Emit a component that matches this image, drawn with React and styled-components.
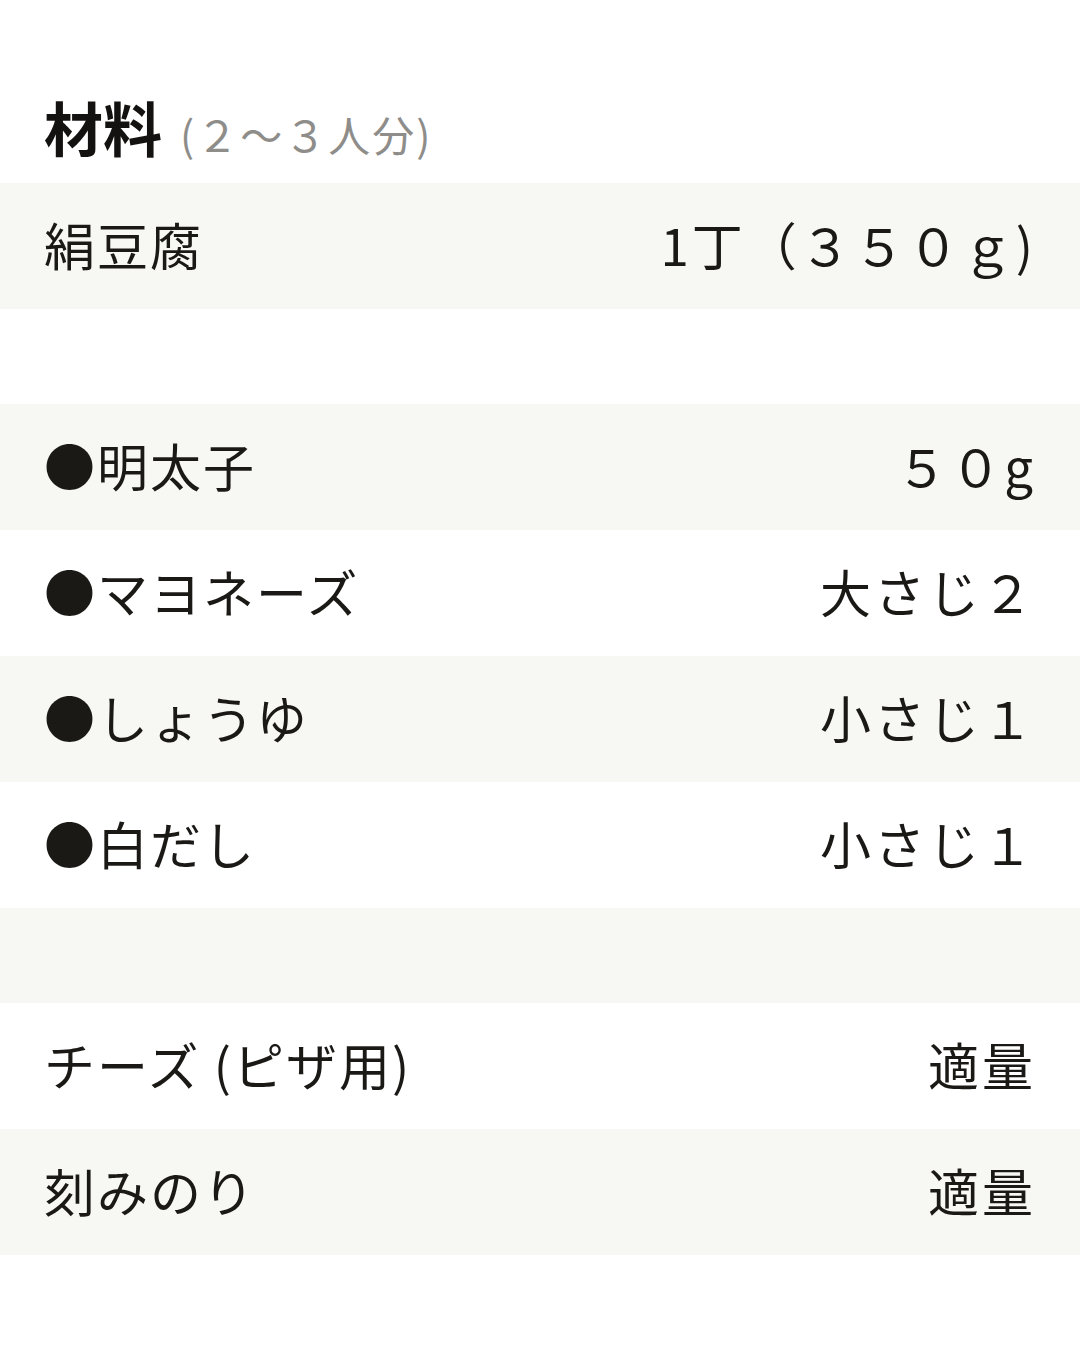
import React from "react";
import styled, { createGlobalStyle } from "styled-components";

const GlobalStyle = createGlobalStyle`
  html, body {
    margin: 0;
    padding: 0;
    background: #ffffff;
  }
  body {
    font-family: "Noto Sans CJK JP", "Noto Sans", sans-serif;
    color: #1b1916;
  }
`;

const ingredients = [
  { name: "絹豆腐", amount: "1丁（３５０ｇ)" },
  { spacer: true },
  { name: "●明太子", amount: "５０g" },
  { name: "●マヨネーズ", amount: "大さじ２" },
  { name: "●しょうゆ", amount: "小さじ１" },
  { name: "●白だし", amount: "小さじ１" },
  { spacer: true },
  { name: "チーズ (ピザ用)", amount: "適量" },
  { name: "刻みのり", amount: "適量" },
];

const Page = styled.main`
  width: 1080px;
  height: 1350px;
  background: #ffffff;
  overflow: hidden;
`;

const Header = styled.header`
  height: 183px;
  box-sizing: border-box;
  padding: 0 44px 27px;
  display: flex;
  align-items: flex-end;
  gap: 18px;
`;

const Title = styled.h1`
  margin: 0;
  font-size: 59px;
  line-height: 1;
  font-weight: 700;
  color: #141210;
`;

const Serving = styled.span`
  font-size: 42px;
  line-height: 1;
  font-weight: 400;
  color: #8e8d8a;
  letter-spacing: 2px;
  padding-bottom: 1px;
`;

const List = styled.ul`
  list-style: none;
  margin: 0;
  padding: 0;
`;

const Row = styled.li`
  display: flex;
  align-items: center;
  justify-content: space-between;
  box-sizing: border-box;
  height: ${(p) => (p.$spacer ? "95px" : "126px")};
  padding: 0 44px 4px 44px;
  background: ${(p) => (p.$shaded ? "#f7f7f3" : "#ffffff")};
  font-size: 51px;
  line-height: 1;
`;

const Name = styled.span`
  letter-spacing: 2px;
  white-space: pre;
`;

const Amount = styled.span`
  letter-spacing: 3px;
`;

export default function App() {
  return (
    <Page>
      <GlobalStyle />
      <Header>
        <Title>材料</Title>
        <Serving>(２～３人分)</Serving>
      </Header>
      <List>
        {ingredients.map((item, i) => (
          <Row key={i} $shaded={i % 2 === 0} $spacer={item.spacer}>
            {!item.spacer && (
              <>
                <Name>{item.name}</Name>
                <Amount>{item.amount}</Amount>
              </>
            )}
          </Row>
        ))}
      </List>
    </Page>
  );
}
